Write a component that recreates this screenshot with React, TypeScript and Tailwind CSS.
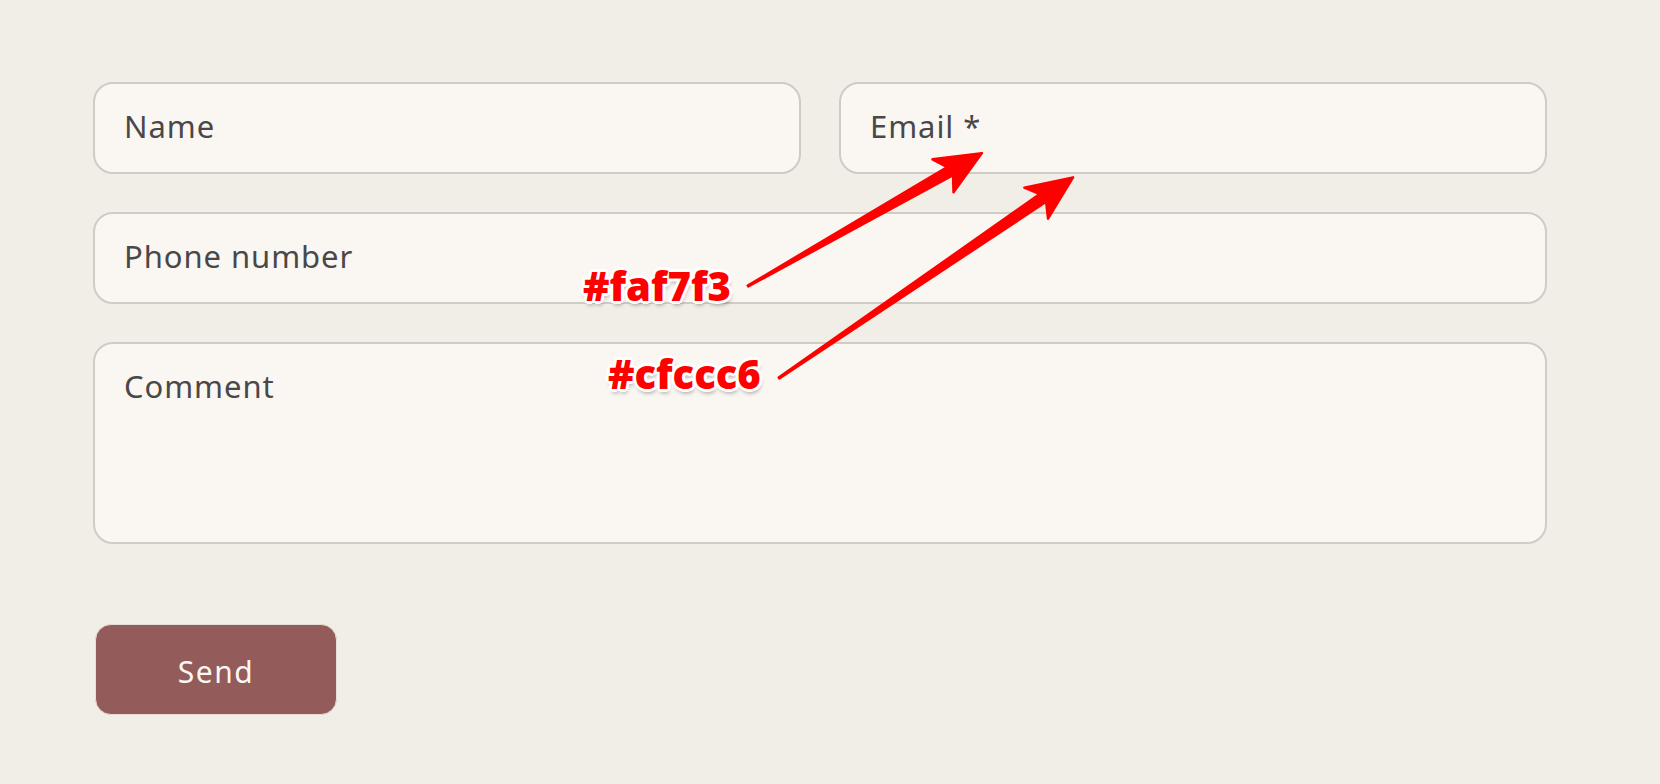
import React from "react";

const fieldBase =
  "w-full rounded-[20px] border-2 border-[#cfccc6] bg-[#faf7f3] px-[29px] text-[31px] text-[#4a4748] tracking-[0.03em] outline-none placeholder:text-[#4a4748] placeholder:opacity-100 font-['Noto_Sans',sans-serif]";

const labelShadow =
  "[text-shadow:3px_0_0_#fff,-3px_0_0_#fff,0_3px_0_#fff,0_-3px_0_#fff,2px_2px_0_#fff,-2px_2px_0_#fff,2px_-2px_0_#fff,-2px_-2px_0_#fff,1px_4px_4px_rgba(0,0,0,0.35)]";

function Arrow({ x, y, angle, length }: { x: number; y: number; angle: number; length: number }) {
  const L = length;
  const pts = [
    [0, -0.5],
    [L - 38, -5],
    [L - 47, -19],
    [L - 1, 0],
    [L - 45, 20],
    [L - 37, 5],
    [0, 0.5],
  ]
    .map((p) => p.join(","))
    .join(" ");
  return (
    <g transform={`translate(${x} ${y}) rotate(${angle})`}>
      <polygon points={pts} fill="#ff0000" stroke="#ff0000" strokeWidth={2.5} strokeLinejoin="round" />
    </g>
  );
}

export default function App() {
  return (
    <div className="relative h-[784px] w-full overflow-hidden bg-[#f1eee7]">
      {/* Contact form */}
      <form className="flex w-[1547px] flex-col pl-[93px] pt-[82px]" onSubmit={(e) => e.preventDefault()}>
        <div className="grid grid-cols-2 gap-[38px]">
          <input className={`${fieldBase} h-[92px] pb-[5px]`} placeholder="Name" />
          <input className={`${fieldBase} h-[92px] pb-[5px]`} placeholder="Email *" />
        </div>
        <input className={`${fieldBase} mt-[38px] h-[92px] pb-[5px]`} placeholder="Phone number" />
        <textarea
          className={`${fieldBase} mt-[38px] h-[202px] resize-none pt-[27px] leading-[31px]`}
          placeholder="Comment"
        />
        <button
          type="submit"
          className="ml-[2px] mt-[80px] h-[91px] w-[242px] rounded-[16px] border border-[#e6ddd6] bg-[#935b59] pt-[3px] text-[30px] tracking-[0.05em] text-[#fcf7f2] font-['Noto_Sans',sans-serif]"
        >
          Send
        </button>
      </form>

      {/* Colour annotations */}
      <svg className="pointer-events-none absolute left-0 top-0" width="1660" height="784">
        <Arrow x={748} y={286} angle={-29.6} length={270} />
        <Arrow x={779} y={378} angle={-34.3} length={357} />
      </svg>
      <span
        className={`pointer-events-none absolute left-[583px] top-[266px] text-[40px] leading-[40px] font-extrabold text-[#ff0000] font-['Open_Sans',sans-serif] ${labelShadow}`}
      >
        #faf7f3
      </span>
      <span
        className={`pointer-events-none absolute left-[608px] top-[354px] text-[40px] leading-[40px] font-extrabold text-[#ff0000] font-['Open_Sans',sans-serif] ${labelShadow}`}
      >
        #cfccc6
      </span>
    </div>
  );
}
